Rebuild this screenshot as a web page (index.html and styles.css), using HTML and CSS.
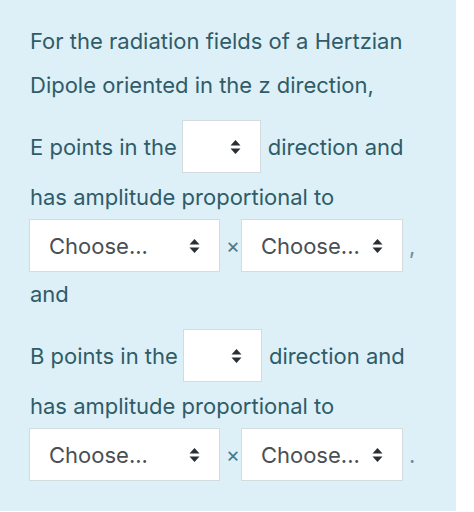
FILE: index.html
```html
<!DOCTYPE html>
<html>
<head>
<meta charset="utf-8">
<link rel="stylesheet" href="styles.css">
</head>
<body>
<div class="panel">
  <div class="line">For the radiation fields of a Hertzian</div>
  <div class="line">Dipole oriented in the z direction,</div>
  <div class="row row-gap">
    <span class="txt">E points in the</span>
    <span class="sel sel-small"><span class="opt"></span><svg class="arrows" viewBox="0 0 10 14"><path d="M5 0 L10 5.5 L0 5.5 Z M0 8.5 L10 8.5 L5 14 Z"/></svg></span>
    <span class="txt">direction and</span>
  </div>
  <div class="line">has amplitude proportional to</div>
  <div class="row">
    <span class="sel sel-wide"><span class="opt">Choose...</span><svg class="arrows" viewBox="0 0 10 14"><path d="M5 0 L10 5.5 L0 5.5 Z M0 8.5 L10 8.5 L5 14 Z"/></svg></span>
    <span class="times">×</span>
    <span class="sel sel-mid"><span class="opt">Choose...</span><svg class="arrows" viewBox="0 0 10 14"><path d="M5 0 L10 5.5 L0 5.5 Z M0 8.5 L10 8.5 L5 14 Z"/></svg></span>
    <span class="punct">,</span>
  </div>
  <div class="line">and</div>
  <div class="row row-gap">
    <span class="txt">B points in the</span>
    <span class="sel sel-small"><span class="opt"></span><svg class="arrows" viewBox="0 0 10 14"><path d="M5 0 L10 5.5 L0 5.5 Z M0 8.5 L10 8.5 L5 14 Z"/></svg></span>
    <span class="txt">direction and</span>
  </div>
  <div class="line">has amplitude proportional to</div>
  <div class="row">
    <span class="sel sel-wide"><span class="opt">Choose...</span><svg class="arrows" viewBox="0 0 10 14"><path d="M5 0 L10 5.5 L0 5.5 Z M0 8.5 L10 8.5 L5 14 Z"/></svg></span>
    <span class="times">×</span>
    <span class="sel sel-mid"><span class="opt">Choose...</span><svg class="arrows" viewBox="0 0 10 14"><path d="M5 0 L10 5.5 L0 5.5 Z M0 8.5 L10 8.5 L5 14 Z"/></svg></span>
    <span class="punct">.</span>
  </div>
</div>
</body>
</html>
```
FILE: styles.css
```css
html, body {
  margin: 0;
  padding: 0;
  background: #ffffff;
}
body {
  width: 474px;
  height: 512px;
  overflow: hidden;
  font-family: "Inter", "Liberation Sans", sans-serif;
}
.panel {
  width: 456px;
  height: 511px;
  box-sizing: border-box;
  background: #ddf0f7;
  padding: 19px 0 0 30px;
  color: #2f5c68;
  font-size: 22px;
}
.line {
  height: 44px;
  line-height: 44px;
  white-space: nowrap;
}
.row {
  display: flex;
  align-items: center;
  height: 53px;
  line-height: 44px;
  white-space: nowrap;
}
.row-gap {
  margin-top: 13px;
  margin-bottom: 2px;
}
.row > .sel:first-child {
  margin-left: -1px;
}
.txt + .sel {
  margin-left: 5px;
}
.sel + .txt {
  margin-left: 7px;
}
.sel {
  display: flex;
  align-items: center;
  justify-content: space-between;
  box-sizing: border-box;
  height: 53px;
  background: #ffffff;
  border: 1px solid #d3dbde;
  padding: 0 19px 0 19px;
  color: #4a4f54;
}
.sel-small { width: 79px; }
.sel-wide { width: 191px; }
.sel-mid { width: 162px; }
.arrows {
  width: 11px;
  height: 14px;
  fill: #2b2f33;
  flex: none;
}
.times {
  font-size: 21px;
  color: #4d7a88;
  margin: 0 1px 0 6px;
}
.punct {
  margin-left: 6px;
  color: #6b8c95;
}
```
